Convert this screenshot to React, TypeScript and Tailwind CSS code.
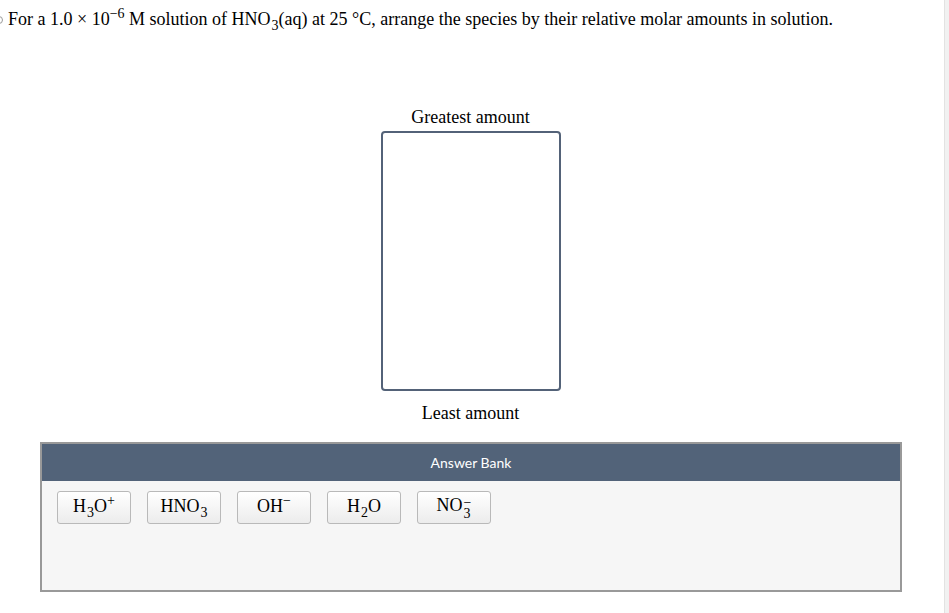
import React from 'react';

const serif = { fontFamily: '"Liberation Serif", "Times New Roman", serif' };

// stacked charge over subscript, e.g. NO3-
const Stack: React.FC<{ sup: string; sub: string }> = ({ sup, sub }) => (
  <span className="inline-flex flex-col items-start align-middle text-[14px] ml-[1px] relative top-[3px]">
    <span className="leading-[9px]">{sup}</span>
    <span className="leading-[14px]">{sub}</span>
  </span>
);

const Sub: React.FC<{ children: React.ReactNode }> = ({ children }) => (
  <sub className="text-[14px] relative top-[5px] ml-[1px]">{children}</sub>
);

const Sup: React.FC<{ children: React.ReactNode }> = ({ children }) => (
  <sup className="text-[14px] relative top-[-7px]">{children}</sup>
);

const species: { key: string; label: React.ReactNode }[] = [
  { key: 'h3o', label: <>H<Sub>3</Sub>O<Sup>+</Sup></> },
  { key: 'hno3', label: <>HNO<Sub>3</Sub></> },
  { key: 'oh', label: <>OH<Sup>−</Sup></> },
  { key: 'h2o', label: <>H<Sub>2</Sub>O</> },
  { key: 'no3', label: <>NO<Stack sup="−" sub="3" /></> },
];

const App: React.FC = () => {
  return (
    <div className="flex w-[949px] h-[613px] bg-white overflow-hidden">
      <div className="flex-1 flex flex-col">
        {/* Question */}
        <div className="flex items-center h-[19px] mt-[10px] text-[18px] text-black" style={serif}>
          <span className="w-[8px] h-[8px] rounded-full border border-[#9a9a9a] ml-[-5px] mr-[5px]" />
          <span className="whitespace-nowrap">
            For a 1.0 × 10<Sup>−6</Sup> M solution of HNO<Sub>3</Sub>(aq) at 25 °C, arrange the species by their relative molar amounts in solution.
          </span>
        </div>

        {/* Ranking */}
        <div className="flex flex-col items-center mt-[78px] pr-[3px] text-[18px] text-black" style={serif}>
          <div className="h-[21px] leading-[21px]">Greatest amount</div>
          <div className="mt-[3px] w-[180px] h-[260px] border-2 border-[#536278] rounded-[4px] bg-white" />
          <div className="mt-[12px] h-[21px] leading-[21px]">Least amount</div>
        </div>

        {/* Answer bank */}
        <div className="ml-[40px] mt-[18px] w-[862px] h-[150px] border-2 border-[#999999] flex flex-col">
          <div
            className="h-[37px] bg-[#526379] flex items-center justify-center text-white text-[14px] pb-[1px]"
            style={{ fontFamily: 'Lato, "Open Sans", sans-serif' }}
          >
            Answer Bank
          </div>
          <div className="flex-1 bg-[#f6f6f6] flex items-start gap-[16px] pl-[15px] pt-[10px]">
            {species.map(s => (
              <button
                key={s.key}
                className="w-[74px] h-[33px] rounded-[3px] border border-[#b9b9b9] bg-gradient-to-b from-white to-[#ececec] text-[18px] text-black flex items-center justify-center leading-none pb-[3px]"
                style={serif}
              >
                <span>{s.label}</span>
              </button>
            ))}
          </div>
        </div>
      </div>
      {/* scrollbar edge */}
      <div className="w-[5px] h-full border-l border-[#e2e2e2] bg-[#f1f1f1]" />
    </div>
  );
};

export default App;
